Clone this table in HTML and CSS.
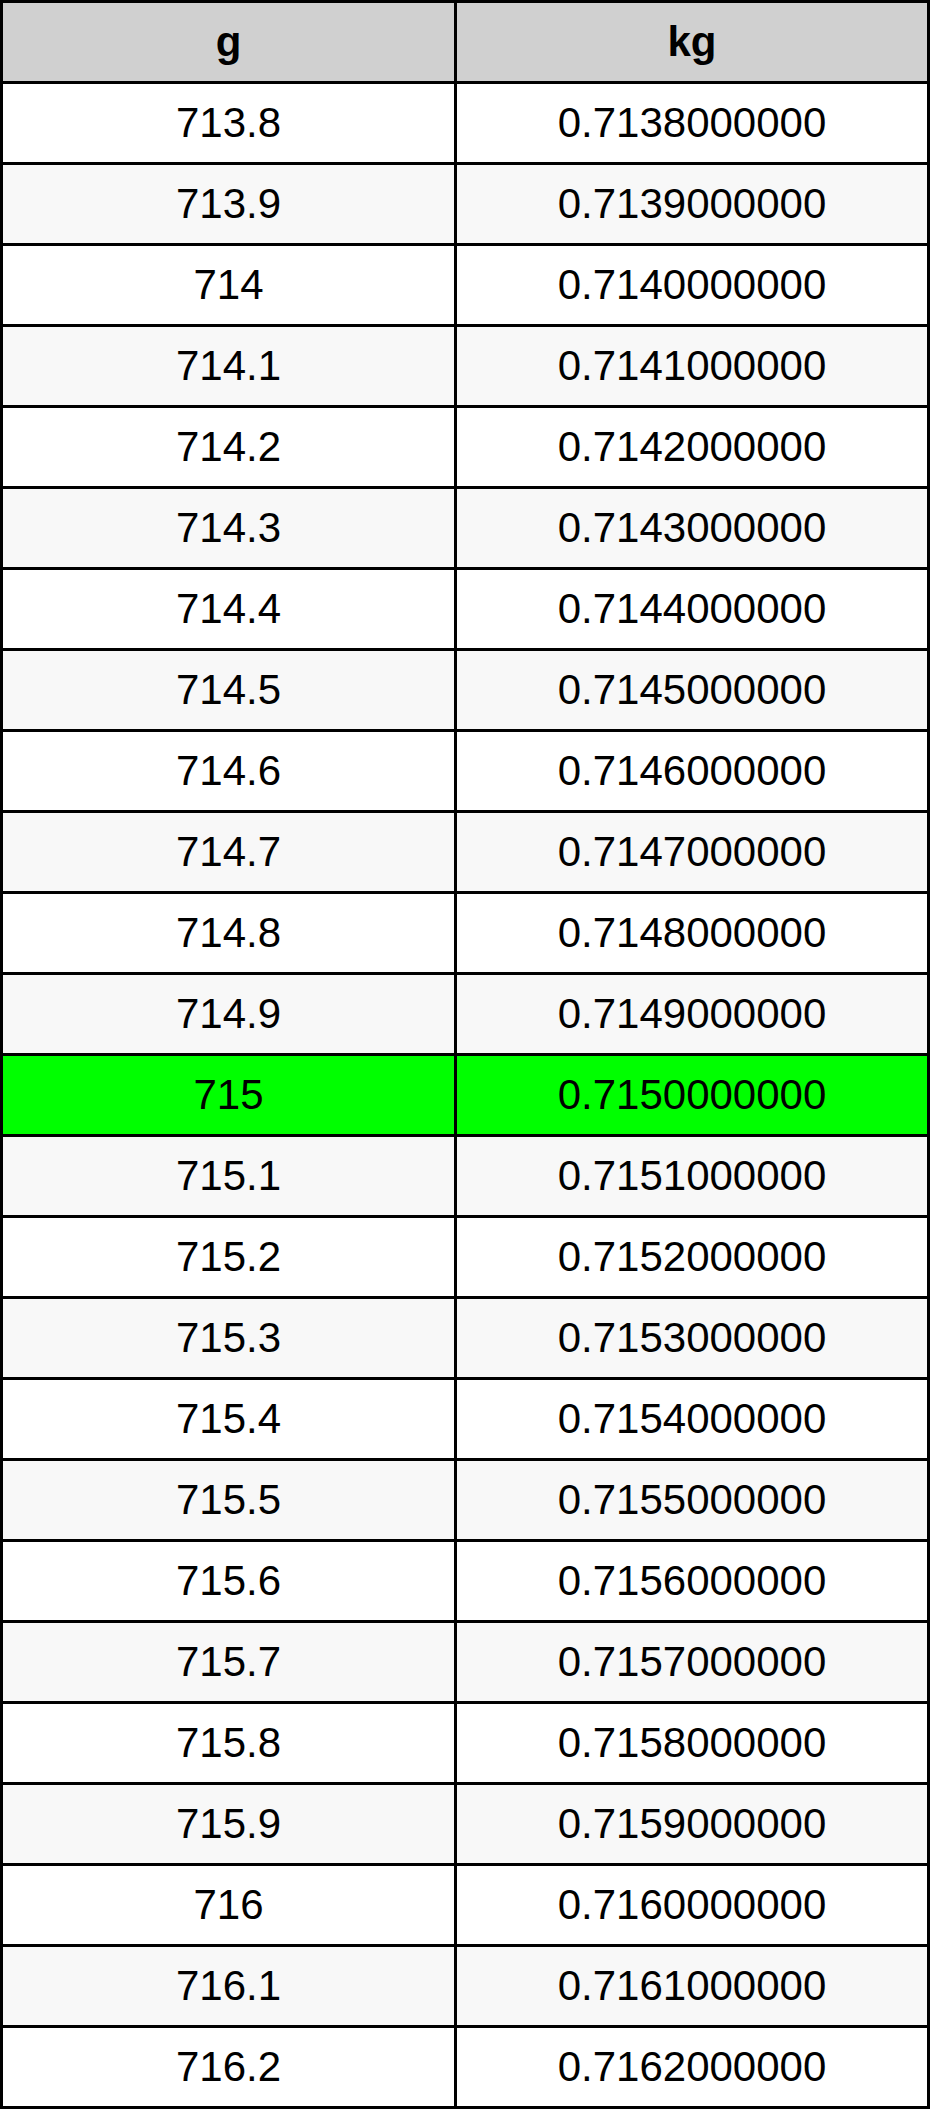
FILE: index.html
```html
<!DOCTYPE html>
<html>
<head>
<meta charset="utf-8">
<link rel="stylesheet" href="styles.css">
</head>
<body>
<table class="conv">
<colgroup><col class="c1"><col class="c2"></colgroup>
<thead><tr><th>g</th><th>kg</th></tr></thead>
<tbody>
<tr><td>713.8</td><td>0.7138000000</td></tr>
<tr><td>713.9</td><td>0.7139000000</td></tr>
<tr><td>714</td><td>0.7140000000</td></tr>
<tr><td>714.1</td><td>0.7141000000</td></tr>
<tr><td>714.2</td><td>0.7142000000</td></tr>
<tr><td>714.3</td><td>0.7143000000</td></tr>
<tr><td>714.4</td><td>0.7144000000</td></tr>
<tr><td>714.5</td><td>0.7145000000</td></tr>
<tr><td>714.6</td><td>0.7146000000</td></tr>
<tr><td>714.7</td><td>0.7147000000</td></tr>
<tr><td>714.8</td><td>0.7148000000</td></tr>
<tr><td>714.9</td><td>0.7149000000</td></tr>
<tr class="hl"><td>715</td><td>0.7150000000</td></tr>
<tr><td>715.1</td><td>0.7151000000</td></tr>
<tr><td>715.2</td><td>0.7152000000</td></tr>
<tr><td>715.3</td><td>0.7153000000</td></tr>
<tr><td>715.4</td><td>0.7154000000</td></tr>
<tr><td>715.5</td><td>0.7155000000</td></tr>
<tr><td>715.6</td><td>0.7156000000</td></tr>
<tr><td>715.7</td><td>0.7157000000</td></tr>
<tr><td>715.8</td><td>0.7158000000</td></tr>
<tr><td>715.9</td><td>0.7159000000</td></tr>
<tr><td>716</td><td>0.7160000000</td></tr>
<tr><td>716.1</td><td>0.7161000000</td></tr>
<tr><td>716.2</td><td>0.7162000000</td></tr>
</tbody>
</table>
</body>
</html>
```
FILE: styles.css
```css
html, body {
  margin: 0;
  padding: 0;
  background: #ffffff;
}
.conv {
  border-collapse: collapse;
  table-layout: fixed;
  width: 930px;
  font-family: "Liberation Sans", Arial, sans-serif;
  font-size: 42px;
  color: #000000;
}
.conv .c1 { width: 454px; }
.conv .c2 { width: 473px; }
.conv th, .conv td {
  border: 3px solid #000000;
  height: 78px;
  padding: 0;
  text-align: center;
  vertical-align: middle;
}
.conv th {
  background: #d0d0d0;
  font-weight: bold;
}
.conv tbody tr { background: #ffffff; }
.conv tbody tr:nth-child(even) { background: #f8f8f8; }
.conv tbody tr.hl { background: #00ff00; }
```
